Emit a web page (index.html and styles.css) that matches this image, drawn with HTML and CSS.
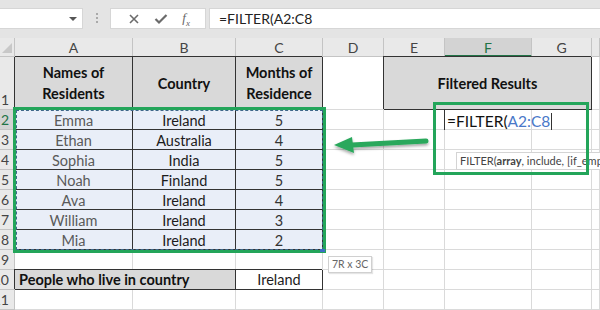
FILE: index.html
```html
<!DOCTYPE html>
<html lang="en">

<head>
  <meta charset="UTF-8">
  <link rel="stylesheet" href="styles.css">
  <title>FILTER example</title>
</head>

<body>
  <div class="wrap">

    <!-- formula bar -->
    <div class="toolbar">
      <div class="name-box"><span class="drop"></span></div>
      <div class="grip"><i></i><i></i><i></i></div>
      <div class="fx-box">
        <svg width="12" height="12" viewBox="0 0 12 12"><path d="M2 2 L10 10 M10 2 L2 10" stroke="#6b6b6b" stroke-width="1.6" /></svg>
        <svg width="14" height="12" viewBox="0 0 14 12"><path d="M1.5 6 L5 9.5 L12.5 2" stroke="#6b6b6b" stroke-width="2.2" fill="none" /></svg>
        <span class="fx">f<sub>x</sub></span>
      </div>
      <div class="formula">=FILTER(A2:C8</div>
    </div>

    <!-- grid -->
    <div class="sheet">
      <div class="ch corner"><span class="tri"></span></div>
      <div class="ch">A</div>
      <div class="ch">B</div>
      <div class="ch">C</div>
      <div class="ch">D</div>
      <div class="ch">E</div>
      <div class="ch sel">F</div>
      <div class="ch">G</div>
      <div class="ch"></div>

      <div class="rh">1</div>
      <div class="c hd">Names of<br>Residents</div>
      <div class="c hd">Country</div>
      <div class="c hd">Months of<br>Residence</div>
      <div class="c"></div>
      <div class="c hd span3">Filtered Results</div>
      <div class="c"></div>

      <div class="rh sel">2</div>
      <div class="c dt nm">Emma</div>
      <div class="c dt">Ireland</div>
      <div class="c dt num">5</div>
      <div class="c"></div>
      <div class="c"></div>
      <div class="c active"></div>
      <div class="c"></div>
      <div class="c"></div>

      <div class="rh">3</div>
      <div class="c dt nm">Ethan</div>
      <div class="c dt">Australia</div>
      <div class="c dt num">4</div>
      <div class="c"></div><div class="c"></div><div class="c"></div><div class="c"></div><div class="c"></div>

      <div class="rh">4</div>
      <div class="c dt nm">Sophia</div>
      <div class="c dt">India</div>
      <div class="c dt num">5</div>
      <div class="c"></div><div class="c"></div><div class="c"></div><div class="c"></div><div class="c"></div>

      <div class="rh">5</div>
      <div class="c dt nm">Noah</div>
      <div class="c dt">Finland</div>
      <div class="c dt num">5</div>
      <div class="c"></div><div class="c"></div><div class="c"></div><div class="c"></div><div class="c"></div>

      <div class="rh">6</div>
      <div class="c dt nm">Ava</div>
      <div class="c dt">Ireland</div>
      <div class="c dt num">4</div>
      <div class="c"></div><div class="c"></div><div class="c"></div><div class="c"></div><div class="c"></div>

      <div class="rh">7</div>
      <div class="c dt nm">William</div>
      <div class="c dt">Ireland</div>
      <div class="c dt num">3</div>
      <div class="c"></div><div class="c"></div><div class="c"></div><div class="c"></div><div class="c"></div>

      <div class="rh">8</div>
      <div class="c dt nm">Mia</div>
      <div class="c dt">Ireland</div>
      <div class="c dt num">2</div>
      <div class="c"></div><div class="c"></div><div class="c"></div><div class="c"></div><div class="c"></div>

      <div class="rh">9</div>
      <div class="c"></div><div class="c"></div><div class="c"></div>
      <div class="c"></div><div class="c"></div><div class="c"></div><div class="c"></div><div class="c"></div>

      <div class="rh">10</div>
      <div class="c hd label span2">People who live in country</div>
      <div class="c box">Ireland</div>
      <div class="c"></div><div class="c"></div><div class="c"></div><div class="c"></div><div class="c"></div>

      <div class="rh">11</div>
      <div class="c"></div><div class="c"></div><div class="c"></div>
      <div class="c"></div><div class="c"></div><div class="c"></div><div class="c"></div><div class="c"></div>
    </div>

    <!-- overlays -->
    <div class="range-sel"><div class="ants"></div><span class="handle"></span></div>
    <div class="edit-cell">=FILTER(<span class="ref">A2:C8</span><span class="caret"></span></div>
    <div class="hint">FILTER(<b>array</b>, include, [if_empty])</div>
    <div class="callout"></div>
    <svg class="arrow" width="110" height="30" viewBox="0 0 110 30">
      <defs>
        <filter id="sh" x="-20%" y="-50%" width="140%" height="200%">
          <feDropShadow dx="0" dy="2" stdDeviation="1.5" flood-color="#000" flood-opacity="0.35" />
        </filter>
      </defs>
      <g filter="url(#sh)">
        <path d="M94 9 L20 13" stroke="#2aa85c" stroke-width="5" stroke-linecap="round" />
        <polygon points="2,13 20,5 22,21" fill="#2aa85c" />
      </g>
    </svg>
    <div class="size-tip">7R x 3C</div>

  </div>
</body>

</html>
```

FILE: styles.css
```css
body {
  margin: 0;
  font-family: Lato, "Open Sans", sans-serif;
  background: #fff;
  overflow: hidden;
}

.wrap {
  position: relative;
  width: 600px;
  height: 310px;
  overflow: hidden;
}

/* formula bar */
.toolbar {
  display: flex;
  align-items: flex-start;
  height: 38px;
  padding-top: 8px;
  box-sizing: border-box;
  background: #e4e4e4;
}

.name-box {
  position: relative;
  width: 83px;
  height: 21px;
  background: #fff;
  border: 1px solid #d6d6d6;
  border-left: none;
  box-sizing: border-box;
}

.drop {
  position: absolute;
  right: 5px;
  top: 8px;
  border-left: 4px solid transparent;
  border-right: 4px solid transparent;
  border-top: 4px solid #555;
}

.grip {
  display: flex;
  flex-direction: column;
  gap: 2px;
  width: 27px;
  align-items: center;
  padding-top: 5px;
}

.grip i {
  width: 2px;
  height: 2px;
  background: #a9a9a9;
}

.fx-box {
  display: flex;
  align-items: center;
  justify-content: space-around;
  width: 96px;
  height: 21px;
  background: #fff;
  border: 1px solid #d6d6d6;
  box-sizing: border-box;
  padding: 0 8px 0 10px;
}

.fx {
  font-family: "Liberation Serif", serif;
  font-style: italic;
  font-size: 13px;
  color: #666;
}

.fx sub {
  font-size: 9px;
}

.formula {
  flex: 1;
  height: 21px;
  margin-left: 3px;
  background: #fff;
  border: 1px solid #d6d6d6;
  border-right: none;
  box-sizing: border-box;
  padding-left: 9px;
  font-size: 14px;
  line-height: 20px;
  color: #222;
}

/* sheet grid */
.sheet {
  display: grid;
  grid-template-columns: 15px 118px 103px 87px 61px 61px 87px 60px 8px;
  grid-template-rows: 19px 53px repeat(10, 20px);
}

.ch {
  background: #e9e9e9;
  border-right: 1px solid #c4c4c4;
  border-bottom: 1px solid #c4c4c4;
  box-sizing: border-box;
  text-align: center;
  font-size: 14px;
  line-height: 19px;
  color: #444;
}

.ch.sel {
  background: #d3d3d3;
  color: #217346;
  border-bottom: 2px solid #217346;
}

.corner {
  position: relative;
}

.tri {
  position: absolute;
  right: 2px;
  bottom: 3px;
  border-left: 10px solid transparent;
  border-bottom: 10px solid #c8c8c8;
}

.rh {
  display: flex;
  align-items: flex-end;
  justify-content: flex-end;
  padding-right: 5px;
  background: #e9e9e9;
  border-right: 1px solid #c4c4c4;
  border-bottom: 1px solid #c4c4c4;
  box-sizing: border-box;
  font-size: 14px;
  line-height: 19px;
  color: #444;
  white-space: nowrap;
}

.rh.sel {
  background: #d3d3d3;
  color: #217346;
}

.c {
  display: flex;
  align-items: center;
  justify-content: center;
  border-right: 1px solid #dadada;
  border-bottom: 1px solid #dadada;
  box-sizing: border-box;
  font-size: 14.5px;
  color: #1c1c1c;
  text-align: center;
  white-space: nowrap;
}

.hd {
  background: #d9d9d9;
  border-color: #333;
  box-shadow: -1px -1px 0 #333;
  font-weight: bold;
  line-height: 21px;
  color: #111;
}

.dt {
  background: #e9eef8;
  border-color: #333;
  box-shadow: -1px -1px 0 #333;
  padding-top: 1px;
}

.nm {
  color: #5a5a5a;
}

.num {
  color: #333;
}

.span3 {
  grid-column: span 3;
}

.span2 {
  grid-column: span 2;
}

.label {
  justify-content: flex-start;
  padding-left: 4px;
}

.box {
  border-color: #333;
  box-shadow: -1px -1px 0 #333;
}

.active {
  box-shadow: -1px 0 0 #333;
}

/* overlays */
.range-sel {
  position: absolute;
  left: 13px;
  top: 107px;
  width: 313px;
  height: 146px;
  border: 3px solid #23a55a;
  box-sizing: border-box;
}

.ants {
  position: absolute;
  inset: 0;
  border: 1px dashed #3f6789;
}

.handle {
  position: absolute;
  right: -2px;
  bottom: -2px;
  width: 5px;
  height: 3px;
  background: #3c6ec4;
}

.callout {
  position: absolute;
  left: 433px;
  top: 102px;
  width: 156px;
  height: 73px;
  border: 3px solid #23a55a;
  box-sizing: border-box;
}

.edit-cell {
  position: absolute;
  left: 447px;
  top: 112px;
  font-size: 15.5px;
  line-height: 18px;
  color: #111;
  display: flex;
  align-items: center;
}

.ref {
  color: #4a78c8;
}

.caret {
  width: 1px;
  height: 17px;
  margin-left: 1px;
  background: #333;
}

.hint {
  position: absolute;
  left: 456px;
  top: 152px;
  height: 16px;
  padding: 0 3px;
  background: #fff;
  border: 1px solid #d4d4d4;
  font-size: 11px;
  line-height: 15px;
  color: #444;
  white-space: nowrap;
}

.arrow {
  position: absolute;
  left: 332px;
  top: 132px;
}

.size-tip {
  position: absolute;
  left: 328px;
  top: 256px;
  padding: 0 3px;
  background: #fff;
  border: 1px solid #d0d0d0;
  font-size: 10.5px;
  line-height: 15px;
  color: #666;
  box-shadow: 1px 1px 1px rgba(0, 0, 0, 0.1);
}
```
